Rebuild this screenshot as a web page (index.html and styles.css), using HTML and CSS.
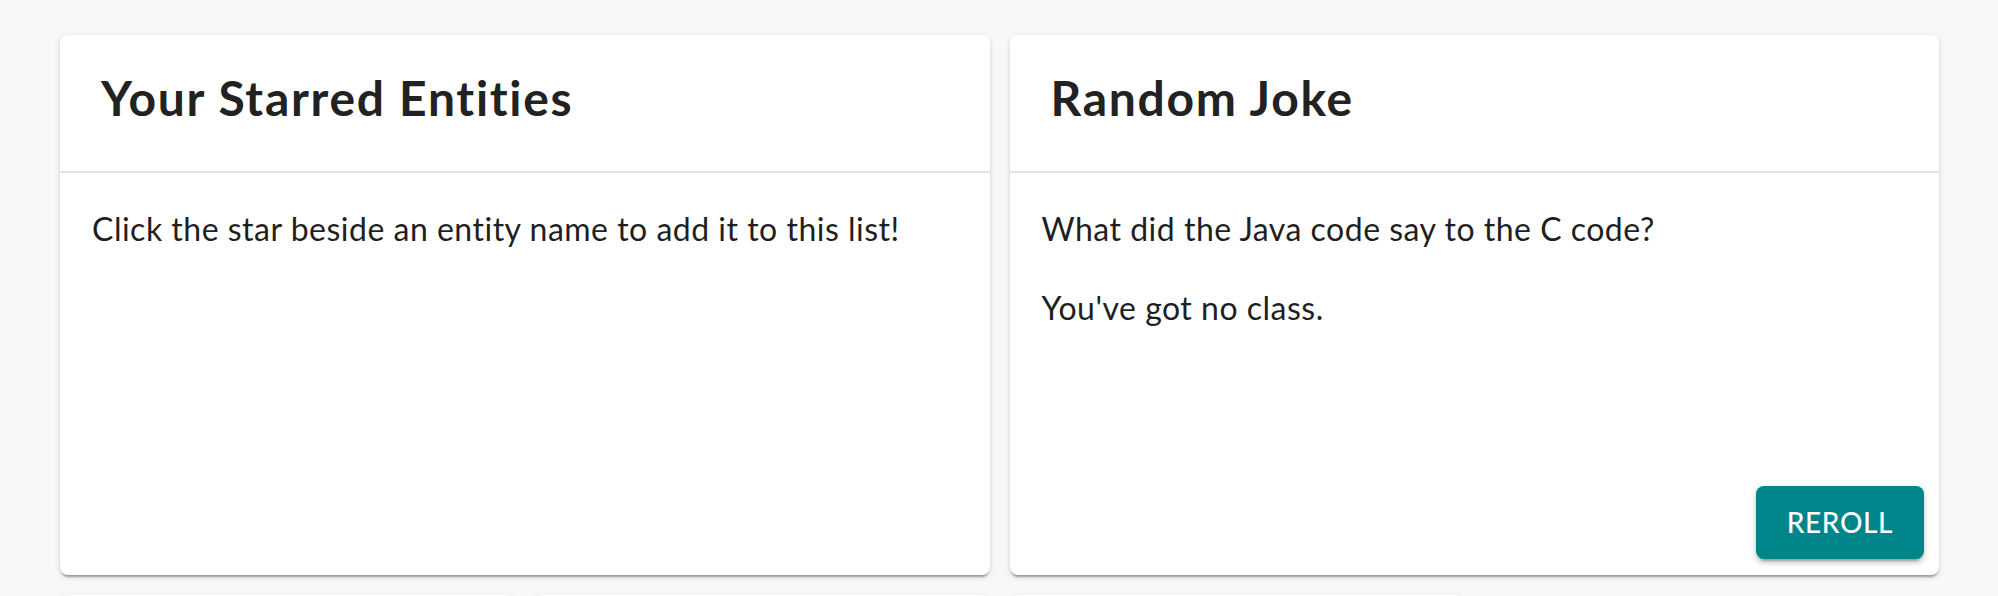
FILE: index.html
```html
<!DOCTYPE html>
<html lang="en">
<head>
<meta charset="utf-8">
<title>Home</title>
<link rel="stylesheet" href="styles.css">
</head>
<body>
<main class="page">
  <section class="row row-top">
    <article class="card">
      <header class="card-header">
        <h2 class="card-title">Your Starred Entities</h2>
      </header>
      <div class="card-divider"></div>
      <div class="card-body">
        <p class="text">Click the star beside an entity name to add it to this list!</p>
      </div>
    </article>
    <article class="card">
      <header class="card-header">
        <h2 class="card-title">Random Joke</h2>
      </header>
      <div class="card-divider"></div>
      <div class="card-body">
        <p class="text joke-line">What did the Java code say to the C code?</p>
        <p class="text">You've got no class.</p>
      </div>
      <div class="card-actions">
        <button class="btn" type="button">Reroll</button>
      </div>
    </article>
  </section>
  <section class="row row-next">
    <div class="card card-stub"></div>
    <div class="card card-stub"></div>
    <div class="card card-stub"></div>
  </section>
</main>
</body>
</html>
```

FILE: styles.css
```css
* { box-sizing: border-box; }

html, body {
  margin: 0;
  padding: 0;
  background: #f8f8f8;
  height: 100%;
  overflow: hidden;
}

body {
  font-family: Lato, "Noto Sans", "Liberation Sans", sans-serif;
  color: #222222;
}

.page {
  padding: 35px 59px 0 60px;
  display: flex;
  flex-direction: column;
  gap: 20px;
}

.row-top {
  display: grid;
  grid-template-columns: 1fr 1fr;
  gap: 20px;
  height: 540px;
}

.row-next {
  display: grid;
  grid-template-columns: repeat(4, 1fr);
  gap: 20px;
  height: 200px;
}

.card {
  background: #ffffff;
  border-radius: 8px;
  box-shadow: 0 4px 2px -2px rgba(0,0,0,0.2), 0 2px 2px 0 rgba(0,0,0,0.14), 0 2px 6px 0 rgba(0,0,0,0.12);
  display: flex;
  flex-direction: column;
  overflow: hidden;
}

.card-header {
  padding: 22px 32px 32px 41px;
  height: 136px;
  display: flex;
  align-items: center;
}

.card-title {
  margin: 0;
  font-size: 48px;
  font-weight: 700;
  line-height: 64px;
  color: #222222;
  letter-spacing: 1.7px;
}

.card-divider {
  height: 2px;
  background: #e3e3e3;
}

.card-body {
  padding: 32px 32px 0 32px;
  flex: 1;
}

.text {
  margin: 0;
  font-size: 32px;
  line-height: 48px;
  color: #1f1f1f;
  letter-spacing: 0.5px;
}

.joke-line {
  margin-bottom: 31px;
}

.card-actions {
  display: flex;
  justify-content: flex-end;
  padding: 16px 15px 16px 16px;
}

.btn {
  font-family: Lato, "Noto Sans", "Liberation Sans", sans-serif;
  font-size: 28px;
  font-weight: 500;
  line-height: 49px;
  letter-spacing: 0.6px;
  text-transform: uppercase;
  color: #ffffff;
  background: #00868a;
  border: none;
  border-radius: 8px;
  padding: 12px 31px;
  min-width: 167px;
  box-shadow: 0 6px 2px -4px rgba(0,0,0,0.2), 0 4px 4px 0 rgba(0,0,0,0.14), 0 2px 10px 0 rgba(0,0,0,0.12);
  cursor: pointer;
}

.card-stub {
  height: 200px;
}
```
